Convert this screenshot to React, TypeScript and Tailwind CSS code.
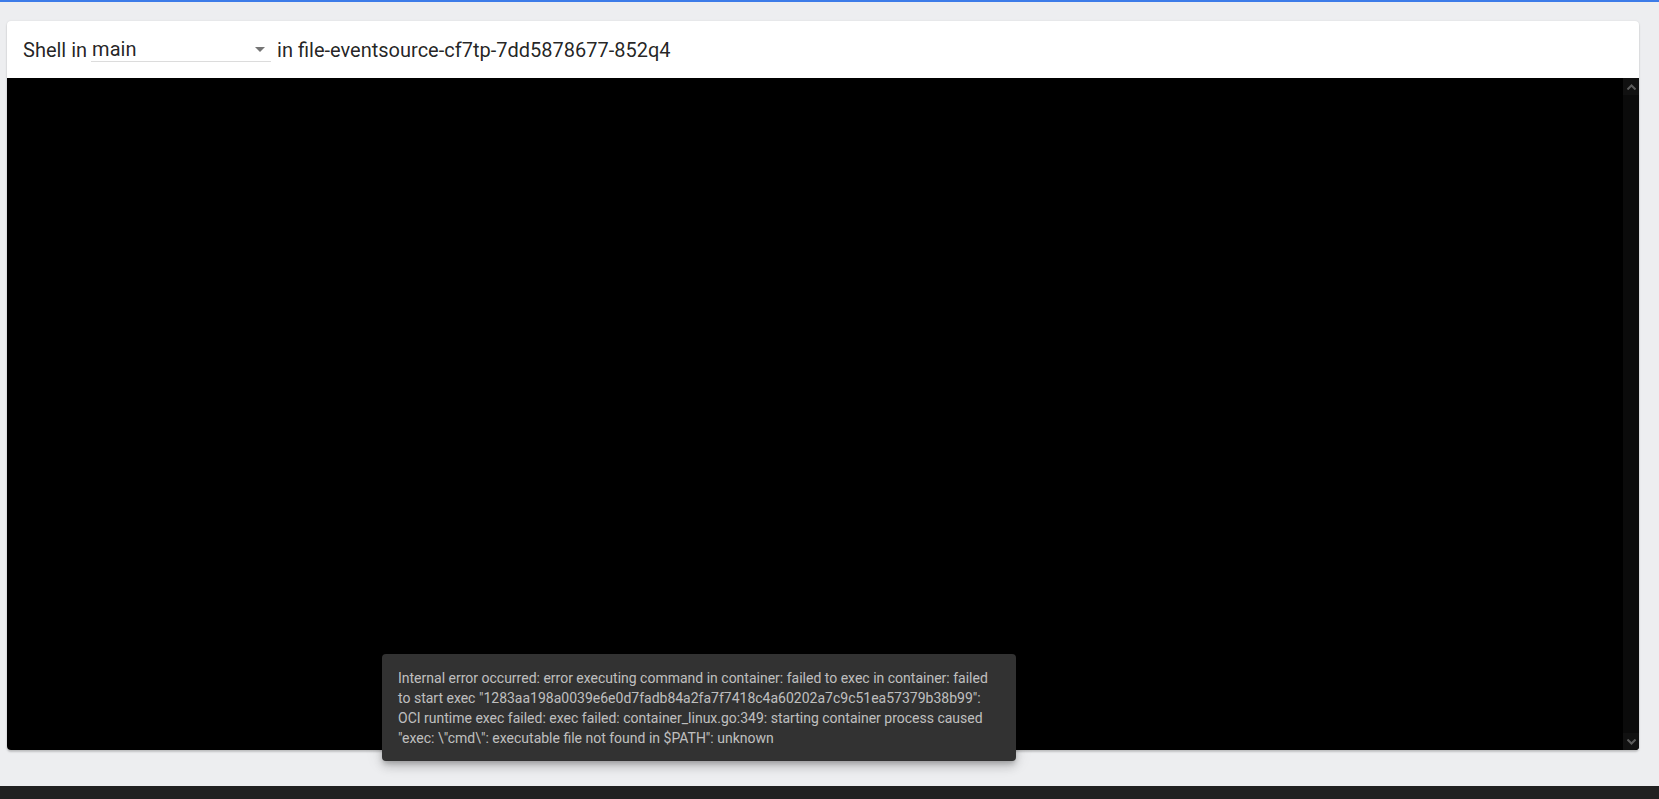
import React from 'react'

const podName = 'file-eventsource-cf7tp-7dd5878677-852q4'

const errorText =
  'Internal error occurred: error executing command in container: failed to exec in container: failed to start exec "1283aa198a0039e6e0d7fadb84a2fa7f7418c4a60202a7c9c51ea57379b38b99": OCI runtime exec failed: exec failed: container_linux.go:349: starting container process caused "exec: \\"cmd\\": executable file not found in $PATH": unknown'

function ContainerSelect() {
  return (
    <div className="mx-[4px] flex h-[25px] w-[180px] items-center justify-between border-b border-[#dcdcdc]">
      <span className="pl-[1px] leading-[24px]">main</span>
      <svg width="10" height="5" viewBox="0 0 10 5" className="mr-[6px] mt-[1px]">
        <path d="M0 0 L10 0 L5 5 Z" fill="#757575" />
      </svg>
    </div>
  )
}

function TerminalScrollbar() {
  return (
    <div className="flex w-[16px] flex-col justify-between bg-[#0b0b0b]">
      <div className="flex h-[17px] items-center justify-center bg-[#111]">
        <svg width="9" height="6" viewBox="0 0 9 6">
          <path d="M0.5 5.5 L4.5 1.5 L8.5 5.5" stroke="#5c5c5c" strokeWidth="2" fill="none" />
        </svg>
      </div>
      <div className="flex h-[17px] items-center justify-center bg-[#111]">
        <svg width="9" height="6" viewBox="0 0 9 6">
          <path d="M0.5 0.5 L4.5 4.5 L8.5 0.5" stroke="#5c5c5c" strokeWidth="2" fill="none" />
        </svg>
      </div>
    </div>
  )
}

export default function App() {
  return (
    <div className="relative flex h-[799px] w-full flex-col overflow-hidden bg-[#edeef0] font-['Roboto',sans-serif]">
      <div className="h-[2px] bg-[#3d7ce8]" />

      <main className="flex-1 pl-[7px] pr-[20px] pt-[19px]">
        {/* Shell card */}
        <div className="flex h-[729px] flex-col overflow-hidden rounded-[4px] bg-white shadow-[0_2px_2px_rgba(0,0,0,0.18),0_0_2px_rgba(0,0,0,0.1)]">
          <div className="flex h-[57px] items-center pl-[16px] text-[20px] leading-[24px] text-[rgba(0,0,0,0.87)]">
            <span>Shell in</span>
            <ContainerSelect />
            <span className="ml-[2px]">in {podName}</span>
          </div>
          <div className="flex flex-1 bg-black">
            <div className="flex-1" />
            <TerminalScrollbar />
          </div>
        </div>
      </main>

      <div className="h-[13px] bg-[#212121]" />

      {/* Error snackbar */}
      <div className="absolute left-[382px] top-[654px] w-[634px] rounded-[4px] bg-[#323232] px-[16px] pb-[13px] pt-[14px] text-[14px] leading-[20px] text-[rgba(255,255,255,0.7)] shadow-[0_3px_5px_-1px_rgba(0,0,0,0.2),0_6px_10px_0_rgba(0,0,0,0.14),0_1px_18px_0_rgba(0,0,0,0.12)]">
        {errorText}
      </div>
    </div>
  )
}
